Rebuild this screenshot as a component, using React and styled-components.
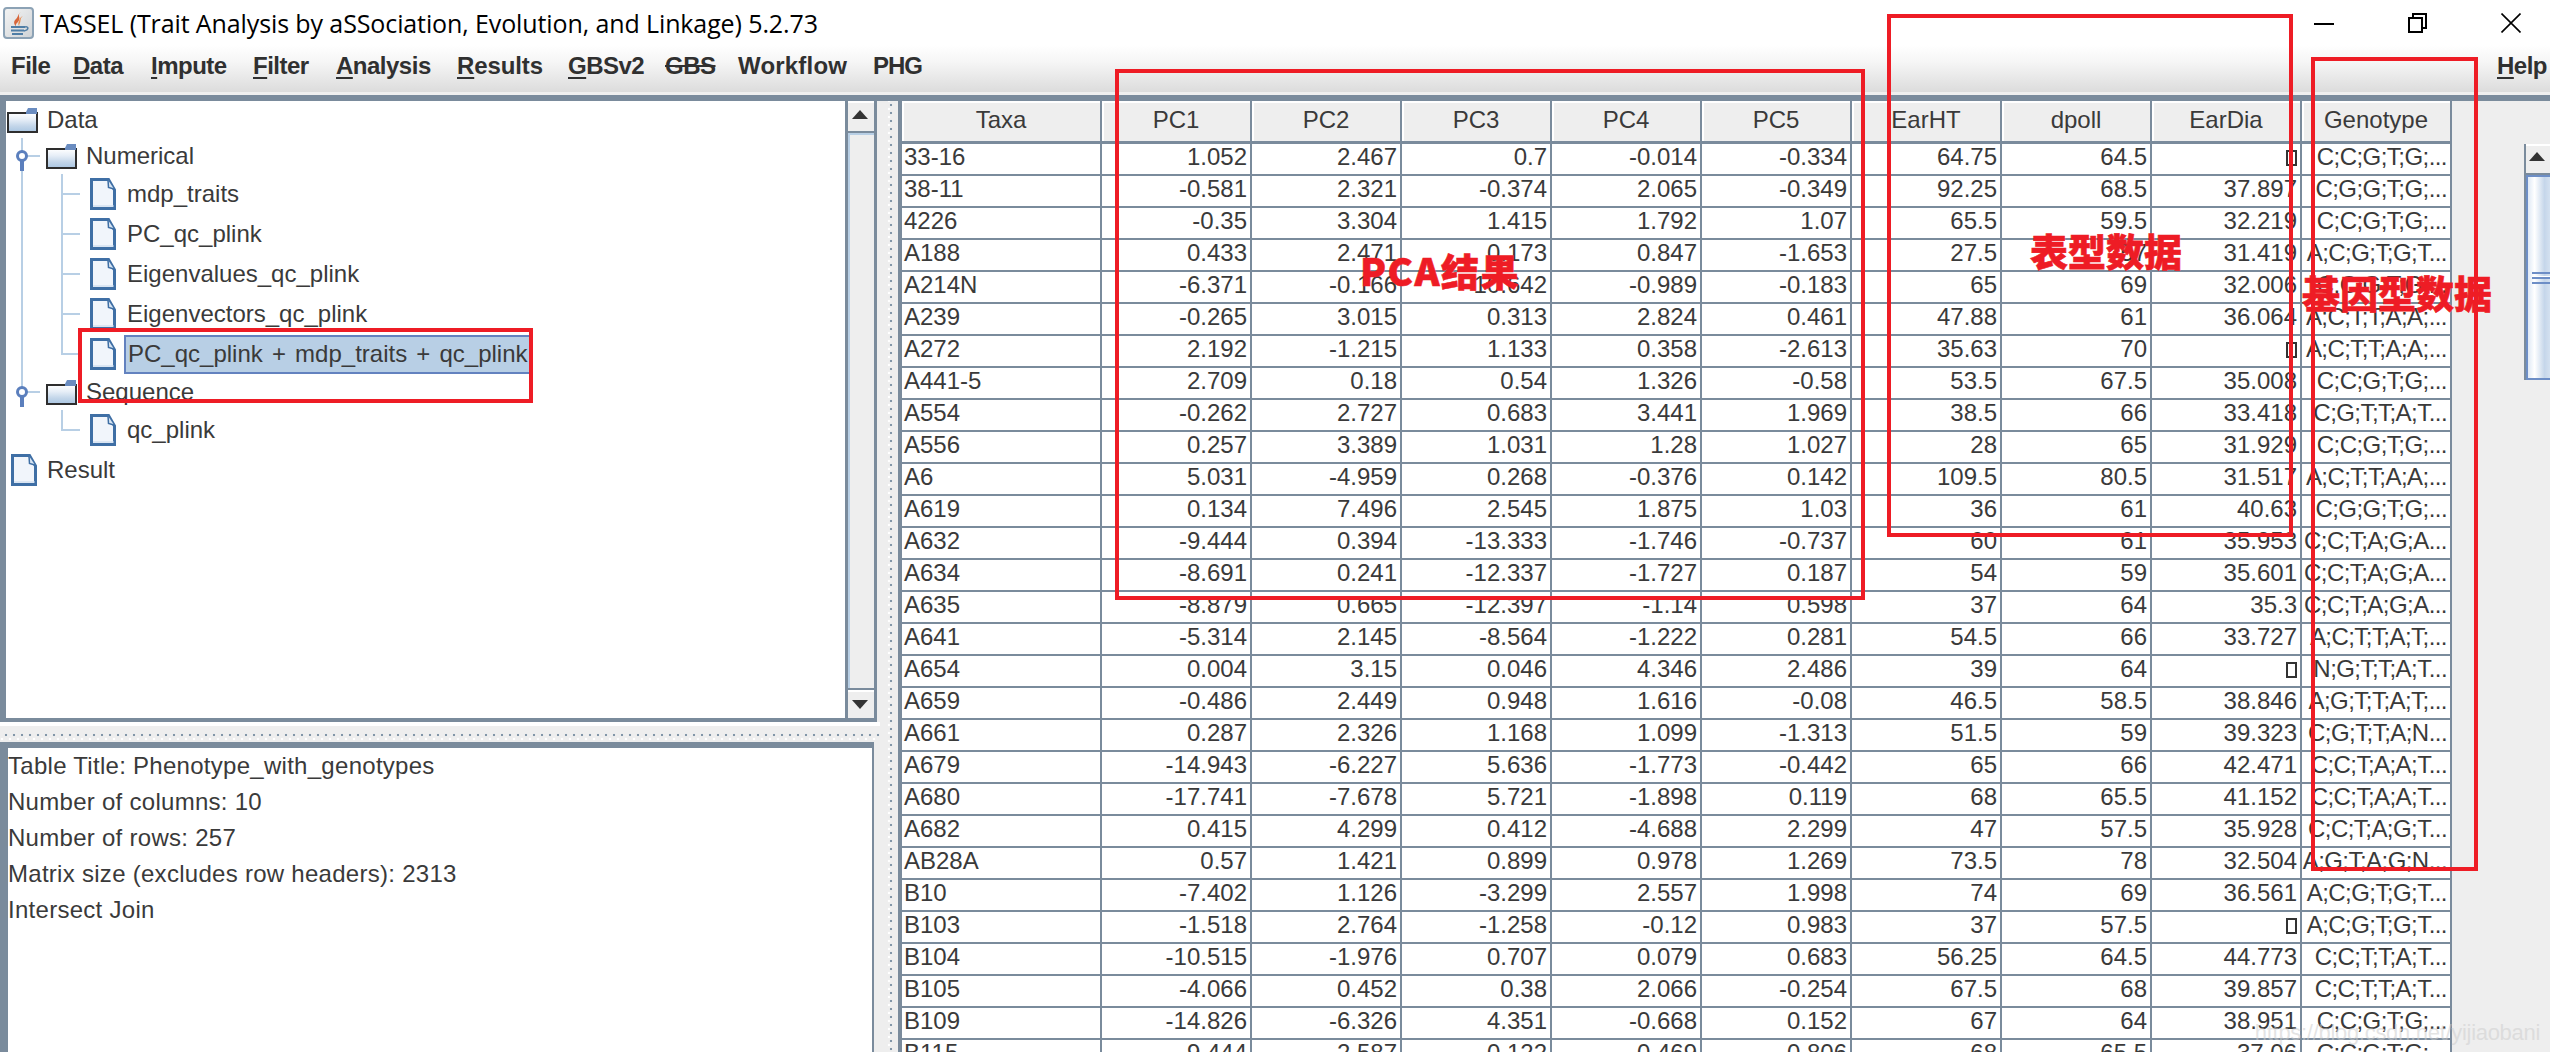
import React from 'react';
import styled, { createGlobalStyle } from 'styled-components';

const LINE = '#7a8b9c';

const GlobalStyle = createGlobalStyle`
  html, body {
    margin: 0;
    padding: 0;
    background: #eeeeee;
  }
  * {
    box-sizing: border-box;
  }
`;

const Window = styled.div`
  position: relative;
  width: 2550px;
  height: 1052px;
  overflow: hidden;
  display: flex;
  flex-direction: column;
  font-family: "Liberation Sans", Arial, sans-serif;
  font-size: 24px;
  color: #3a3a3a;
`;

const TitleBar = styled.div`
  height: 45px;
  flex: none;
  display: flex;
  align-items: center;
  background: #fff;
  padding-left: 3px;
`;

const TitleText = styled.div`
  margin-left: 6px;
  font-family: "Open Sans", sans-serif;
  font-size: 25px;
  letter-spacing: -0.11px;
  color: #000;
  white-space: nowrap;
`;

const WindowButtons = styled.div`
  margin-left: auto;
  display: flex;
  align-items: center;
  padding-right: 29px;
  gap: 74px;
`;

const MenuBar = styled.div`
  height: 50px;
  flex: none;
  display: flex;
  align-items: center;
  padding: 0 7px 5px 11px;
  background: linear-gradient(#fff 0%, #f6f6f6 35%, #dcdcdc 100%);
  border-bottom: 3px solid #efefef;
  font-weight: 700;
  white-space: nowrap;
`;

const MenuItem = styled.div`
  width: ${(p) => p.$w}px;
  flex: none;
  letter-spacing: ${(p) => p.$track ?? -0.5}px;
  color: #303030;
  margin-left: ${(p) => (p.$right ? 'auto' : '0')};
  text-decoration: ${(p) => (p.$struck ? 'line-through' : 'none')};
`;

const Mnemonic = styled.span`
  text-decoration: underline;
  text-underline-offset: 3px;
  text-decoration-thickness: 2px;
`;

const Workspace = styled.div`
  flex: 1;
  min-height: 0;
  display: flex;
  border-top: 6px solid ${LINE};
`;

const LeftColumn = styled.div`
  width: 885px;
  flex: none;
  display: flex;
  flex-direction: column;
  background: #eeeeee;
`;

const TreePane = styled.div`
  width: 877px;
  height: 621px;
  flex: none;
  display: flex;
  border-left: 6px solid ${LINE};
  border-right: 3px solid ${LINE};
  border-bottom: 4px solid ${LINE};
`;

const Tree = styled.div`
  flex: 1;
  background: #fff;
  padding-top: 1px;
`;

const TreeRow = styled.div`
  height: ${(p) => p.$h}px;
  display: flex;
  align-items: center;
  padding-left: ${(p) => p.$pad || 0}px;
  white-space: nowrap;
`;

const GUIDE_LIGHT = '#b8cfe5';

const Guide = styled.div`
  width: ${(p) => p.$w}px;
  height: 100%;
  flex: none;
  display: flex;
  align-items: center;
  padding-left: 10px;
  background-repeat: no-repeat;
  background-image:
    linear-gradient(${GUIDE_LIGHT}, ${GUIDE_LIGHT}),
    linear-gradient(${GUIDE_LIGHT}, ${GUIDE_LIGHT});
  background-size:
    2px ${(p) => (p.$line === 'none' ? '0' : p.$line === 'half' ? '50%' : '100%')},
    ${(p) => p.$stub || 0}px 2px;
  background-position:
    ${(p) => p.$x}px 0,
    ${(p) => p.$x}px 50%;
`;

const RowIcon = styled.svg`
  flex: none;
  display: block;
`;

const RowLabel = styled.span`
  margin-left: ${(p) => p.$gap}px;
  line-height: 38px;
`;

const SelectedLabel = styled.span`
  margin-left: 8px;
  height: 39px;
  line-height: 34px;
  padding: 0 1px 0 2px;
  word-spacing: 2.5px;
  background: #b8cfe5;
  border: 2px solid #6382bf;
  border-right-width: 1px;
`;

const ScrollBar = styled.div`
  width: ${(p) => p.$w}px;
  flex: none;
  display: flex;
  flex-direction: column;
  margin-top: ${(p) => p.$top || 0}px;
  border-left: ${(p) => p.$edge || 2}px solid ${LINE};
  background: #eeeeee;
`;

const ScrollButton = styled.div`
  height: ${(p) => p.$h}px;
  flex: none;
  display: flex;
  align-items: center;
  justify-content: center;
  padding-bottom: ${(p) => (p.$down ? 0 : 4)}px;
  padding-right: 2px;
  background: #eeeeee;
  box-shadow: inset 0 2px 0 #fff;
  border-top: ${(p) => (p.$down ? `2px solid ${LINE}` : 'none')};
  border-bottom: ${(p) => (p.$down ? 'none' : `2px solid ${LINE}`)};
`;

const PlainTrack = styled.div`
  flex: 1;
  border-top: 2px solid ${GUIDE_LIGHT};
  border-left: 2px solid ${GUIDE_LIGHT};
`;

const Thumb = styled.div`
  height: 205px;
  flex: none;
  display: flex;
  align-items: center;
  justify-content: center;
  border: 2px solid #6d8ec6;
  border-right: none;
  background: linear-gradient(90deg, #dfe9f5 0%, #ffffff 30%, #c5d6ea 75%, #d4e1f0 100%);
`;

const Grip = styled.div`
  width: 100%;
  height: 12px;
  margin-left: 4px;
  border-top: 2px solid #6d8ec6;
  border-bottom: 2px solid #6d8ec6;
  background: linear-gradient(#fff, #fff) no-repeat 0 2px / 100% 1px,
    linear-gradient(#6d8ec6, #6d8ec6) no-repeat 0 3px / 100% 2px;
`;

const SplitBar = styled.div`
  height: 20px;
  width: 880px;
  flex: none;
  background:
    radial-gradient(circle, #8296a8 1px, transparent 1.6px) 10px 5px / 8px 8px repeat-x,
    radial-gradient(circle, #ffffff 1px, transparent 1.6px) 14px 9px / 8px 8px repeat-x,
    #eeeeee;
  border-top: 4px solid #fff;
`;

const InfoPane = styled.div`
  flex: 1;
  width: 874px;
  background: #fff;
  border-top: 6px solid ${LINE};
  border-left: 8px solid ${LINE};
  border-right: 2px solid ${LINE};
`;

const InfoLine = styled.div`
  height: 36px;
  line-height: 36px;
  letter-spacing: 0.28px;
  white-space: nowrap;
`;

const VerticalSplit = styled.div`
  width: 13px;
  flex: none;
  background:
    radial-gradient(circle, #8296a8 1px, transparent 1.6px) 2px 0 / 8px 8px repeat-y,
    radial-gradient(circle, #ffffff 1px, transparent 1.6px) 0 4px / 8px 8px repeat-y,
    #eeeeee;
`;

const TablePane = styled.div`
  flex: 1;
  min-width: 0;
  display: flex;
  justify-content: space-between;
  align-items: flex-start;
  border-left: 4px solid ${LINE};
  background: #eeeeee;
`;

const Table = styled.table`
  width: 1550px;
  flex: none;
  table-layout: fixed;
  border-collapse: separate;
  border-spacing: 0;
  font-size: 24px;
`;

const HeadCell = styled.th`
  height: 43px;
  padding: 0 0 3px;
  font-weight: 400;
  text-align: center;
  background: #eeeeee;
  color: #3a3a3a;
  border-right: 2px solid ${LINE};
  border-bottom: 3px solid ${LINE};
  box-shadow: inset 2px 2px 0 #fff;
`;

const Cell = styled.td`
  height: 32px;
  padding: 0 ${(p) => (p.$left ? 0 : 3)}px 4px ${(p) => (p.$left ? 2 : 0)}px;
  line-height: 26px;
  background: #fff;
  color: #3a3a3a;
  text-align: ${(p) => (p.$left ? 'left' : 'right')};
  letter-spacing: ${(p) => (p.$tight ? '-0.55px' : '0')};
  white-space: nowrap;
  overflow: hidden;
  border-right: 2px solid ${LINE};
  border-bottom: 2px solid ${LINE};
`;

const Tofu = styled.span`
  display: inline-block;
  width: 11px;
  height: 16px;
  border: 2px solid #333;
  vertical-align: -1px;
`;

const MarkBox = styled.div`
  position: absolute;
  left: ${(p) => p.$x}px;
  top: ${(p) => p.$y}px;
  width: ${(p) => p.$w}px;
  height: ${(p) => p.$h}px;
  border: 4px solid #ee1c25;
  pointer-events: none;
`;

const MarkLabel = styled.div`
  position: absolute;
  left: ${(p) => p.$x}px;
  top: ${(p) => p.$y}px;
  font-family: "Noto Sans CJK SC", sans-serif;
  font-size: 38px;
  line-height: 40px;
  font-weight: 900;
  color: #ee1c25;
  -webkit-text-stroke: 0.6px #ee1c25;
  white-space: nowrap;
  letter-spacing: ${(p) => p.$track || 0}px;
`;

const Watermark = styled.div`
  position: absolute;
  right: 10px;
  bottom: 6px;
  font-size: 22px;
  letter-spacing: -0.3px;
  color: rgba(205, 205, 205, 0.55);
  white-space: nowrap;
`;

const Folder = () => (
  <RowIcon width="31" height="26" viewBox="0 0 31 26">
    <defs>
      <linearGradient id="folderFill" x1="0" y1="0" x2="0" y2="1">
        <stop offset="0" stopColor="#ffffff" />
        <stop offset="0.35" stopColor="#e6eef7" />
        <stop offset="0.7" stopColor="#c2d5e9" />
        <stop offset="1" stopColor="#aac6e2" />
      </linearGradient>
    </defs>
    <path d="M19 5 L21 1 H30 V6 H19 Z" fill="#6a8cc0" />
    <rect x="1" y="6" width="29" height="19" fill="url(#folderFill)" stroke="#2e2e2e" strokeWidth="2" />
    <path d="M19 6 H30" stroke="#6a8cc0" strokeWidth="2" />
  </RowIcon>
);

const FileIcon = () => (
  <RowIcon width="26" height="32" viewBox="0 0 26 32">
    <path d="M1.5 1.5 H18.5 L24.5 12 V30.5 H1.5 Z" fill="#f1f5fb" stroke="#3f6fa5" strokeWidth="3" />
    <path d="M18 2 L18.5 9.5 L24 11" fill="#d8e5f3" stroke="#3f6fa5" strokeWidth="1.5" />
    <path d="M3 29 H24" stroke="#c4d6ea" strokeWidth="1" transform="translate(0 -1)" />
  </RowIcon>
);

const Handle = () => (
  <RowIcon width="12" height="32" viewBox="0 0 12 32">
    <path d="M6 16 V31" stroke="#5b7fbd" strokeWidth="4" />
    <circle cx="6" cy="16" r="4.5" fill="#fff" stroke="#5b7fbd" strokeWidth="3" />
  </RowIcon>
);

const JavaIcon = () => (
  <RowIcon width="31" height="32" viewBox="0 0 31 32">
    <defs>
      <linearGradient id="javaBg" x1="0" y1="0" x2="1" y2="1">
        <stop offset="0" stopColor="#f4f4f4" />
        <stop offset="1" stopColor="#cfd3d6" />
      </linearGradient>
    </defs>
    <rect x="1" y="1" width="29" height="30" rx="3" fill="url(#javaBg)" stroke="#8ca2b5" strokeWidth="2" />
    <path d="M18 5 C13 9 19 10 15 15 C13 17 12 18 13.5 20 C11 17 10 15 13 12 C16 9 14 8 18 5 Z" fill="#d8663a" />
    <path d="M20 9 C17 11 18 13 17 16 C16 17.5 16 18.5 16.5 19.5 C15 18 15 16 16 14 C17 12 17 10 20 9 Z" fill="#e88a4a" />
    <path d="M8 20 H22 M8 23.5 H21 M9 27 H20" stroke="#4f7ea6" strokeWidth="2" fill="none" />
    <path d="M22 20 C26 19 26 23 21 24" stroke="#4f7ea6" strokeWidth="1.5" fill="none" />
  </RowIcon>
);

const ArrowUp = () => (
  <RowIcon width="16" height="9" viewBox="0 0 16 9">
    <path d="M8 0 L16 9 H0 Z" fill="#333" />
  </RowIcon>
);

const ArrowDown = () => (
  <RowIcon width="16" height="9" viewBox="0 0 16 9">
    <path d="M0 0 H16 L8 9 Z" fill="#333" />
  </RowIcon>
);

const MinimizeIcon = () => (
  <RowIcon width="20" height="20" viewBox="0 0 20 20">
    <path d="M0 11 H20" stroke="#000" strokeWidth="2" />
  </RowIcon>
);

const RestoreIcon = () => (
  <RowIcon width="19" height="20" viewBox="0 0 19 20">
    <rect x="1" y="5" width="13" height="14" fill="#fff" stroke="#000" strokeWidth="2" />
    <path d="M5 5 V1 H18 V15 H14" fill="none" stroke="#000" strokeWidth="2" />
  </RowIcon>
);

const CloseIcon = () => (
  <RowIcon width="20" height="20" viewBox="0 0 20 20">
    <path d="M0.5 0.5 L19.5 19.5 M19.5 0.5 L0.5 19.5" stroke="#000" strokeWidth="1.6" fill="none" />
  </RowIcon>
);

const COLUMNS = ['Taxa', 'PC1', 'PC2', 'PC3', 'PC4', 'PC5', 'EarHT', 'dpoll', 'EarDia', 'Genotype'];

const ROWS = [
  ['33-16', '1.052', '2.467', '0.7', '-0.014', '-0.334', '64.75', '64.5', null, 'C;C;G;T;G;...'],
  ['38-11', '-0.581', '2.321', '-0.374', '2.065', '-0.349', '92.25', '68.5', '37.897', 'C;G;G;T;G;...'],
  ['4226', '-0.35', '3.304', '1.415', '1.792', '1.07', '65.5', '59.5', '32.219', 'C;C;G;T;G;...'],
  ['A188', '0.433', '2.471', '0.173', '0.847', '-1.653', '27.5', '57', '31.419', 'A;C;G;T;G;T...'],
  ['A214N', '-6.371', '-0.166', '-10.642', '-0.989', '-0.183', '65', '69', '32.006', 'C;C;G;T;G;...'],
  ['A239', '-0.265', '3.015', '0.313', '2.824', '0.461', '47.88', '61', '36.064', 'A;C;T;T;A;A;...'],
  ['A272', '2.192', '-1.215', '1.133', '0.358', '-2.613', '35.63', '70', null, 'A;C;T;T;A;A;...'],
  ['A441-5', '2.709', '0.18', '0.54', '1.326', '-0.58', '53.5', '67.5', '35.008', 'C;C;G;T;G;...'],
  ['A554', '-0.262', '2.727', '0.683', '3.441', '1.969', '38.5', '66', '33.418', 'C;G;T;T;A;T...'],
  ['A556', '0.257', '3.389', '1.031', '1.28', '1.027', '28', '65', '31.929', 'C;C;G;T;G;...'],
  ['A6', '5.031', '-4.959', '0.268', '-0.376', '0.142', '109.5', '80.5', '31.517', 'A;C;T;T;A;A;...'],
  ['A619', '0.134', '7.496', '2.545', '1.875', '1.03', '36', '61', '40.63', 'C;G;G;T;G;...'],
  ['A632', '-9.444', '0.394', '-13.333', '-1.746', '-0.737', '60', '61', '35.953', 'C;C;T;A;G;A...'],
  ['A634', '-8.691', '0.241', '-12.337', '-1.727', '0.187', '54', '59', '35.601', 'C;C;T;A;G;A...'],
  ['A635', '-8.879', '0.665', '-12.397', '-1.14', '0.598', '37', '64', '35.3', 'C;C;T;A;G;A...'],
  ['A641', '-5.314', '2.145', '-8.564', '-1.222', '0.281', '54.5', '66', '33.727', 'A;C;T;T;A;T;...'],
  ['A654', '0.004', '3.15', '0.046', '4.346', '2.486', '39', '64', null, 'N;G;T;T;A;T...'],
  ['A659', '-0.486', '2.449', '0.948', '1.616', '-0.08', '46.5', '58.5', '38.846', 'A;G;T;T;A;T;...'],
  ['A661', '0.287', '2.326', '1.168', '1.099', '-1.313', '51.5', '59', '39.323', 'C;G;T;T;A;N...'],
  ['A679', '-14.943', '-6.227', '5.636', '-1.773', '-0.442', '65', '66', '42.471', 'C;C;T;A;A;T...'],
  ['A680', '-17.741', '-7.678', '5.721', '-1.898', '0.119', '68', '65.5', '41.152', 'C;C;T;A;A;T...'],
  ['A682', '0.415', '4.299', '0.412', '-4.688', '2.299', '47', '57.5', '35.928', 'C;C;T;A;G;T...'],
  ['AB28A', '0.57', '1.421', '0.899', '0.978', '1.269', '73.5', '78', '32.504', 'A;G;T;A;G;N...'],
  ['B10', '-7.402', '1.126', '-3.299', '2.557', '1.998', '74', '69', '36.561', 'A;C;G;T;G;T...'],
  ['B103', '-1.518', '2.764', '-1.258', '-0.12', '0.983', '37', '57.5', null, 'A;C;G;T;G;T...'],
  ['B104', '-10.515', '-1.976', '0.707', '0.079', '0.683', '56.25', '64.5', '44.773', 'C;C;T;T;A;T...'],
  ['B105', '-4.066', '0.452', '0.38', '2.066', '-0.254', '67.5', '68', '39.857', 'C;C;T;T;A;T...'],
  ['B109', '-14.826', '-6.326', '4.351', '-0.668', '0.152', '67', '64', '38.951', 'C;C;G;T;G;...'],
  ['B115', '9.444', '2.587', '0.122', '0.469', '0.806', '68', '65.5', '37.06', 'C;C;G;T;G;...'],
];

const INFO = [
  'Table Title: Phenotype_with_genotypes',
  'Number of columns: 10',
  'Number of rows: 257',
  'Matrix size (excludes row headers): 2313',
  'Intersect Join',
];

const FileRow = ({ label, last, noParent, selected }) => (
  <TreeRow $h={40}>
    <Guide $w={40} $x={15} $line={noParent ? 'none' : 'full'} />
    <Guide $w={44} $x={15} $stub={19} $line={last ? 'half' : 'full'} />
    <FileIcon />
    {selected ? <SelectedLabel>{label}</SelectedLabel> : <RowLabel $gap={11}>{label}</RowLabel>}
  </TreeRow>
);

const FolderRow = ({ label, lastBranch }) => (
  <TreeRow $h={36}>
    <Guide $w={40} $x={15} $stub={19} $line={lastBranch ? 'half' : 'full'}>
      <Handle />
    </Guide>
    <Folder />
    <RowLabel $gap={9}>{label}</RowLabel>
  </TreeRow>
);

export default function App() {
  return (
    <Window>
      <GlobalStyle />
      <TitleBar>
        <JavaIcon />
        <TitleText>TASSEL (Trait Analysis by aSSociation, Evolution, and Linkage) 5.2.73</TitleText>
        <WindowButtons>
          <MinimizeIcon />
          <RestoreIcon />
          <CloseIcon />
        </WindowButtons>
      </TitleBar>
      <MenuBar>
        <MenuItem $w={62}>File</MenuItem>
        <MenuItem $w={78}><Mnemonic>D</Mnemonic>ata</MenuItem>
        <MenuItem $w={102}><Mnemonic>I</Mnemonic>mpute</MenuItem>
        <MenuItem $w={83}><Mnemonic>F</Mnemonic>ilter</MenuItem>
        <MenuItem $w={121}><Mnemonic>A</Mnemonic>nalysis</MenuItem>
        <MenuItem $w={111} $track={-0.1}><Mnemonic>R</Mnemonic>esults</MenuItem>
        <MenuItem $w={97}><Mnemonic>G</Mnemonic>BSv2</MenuItem>
        <MenuItem $w={73} $struck>GBS</MenuItem>
        <MenuItem $w={135} $track={0.2}>Workflow</MenuItem>
        <MenuItem $w={60} $track={-1}>PHG</MenuItem>
        <MenuItem $w={46} $right><Mnemonic>H</Mnemonic>elp</MenuItem>
      </MenuBar>
      <Workspace>
        <LeftColumn>
          <TreePane>
            <Tree>
              <TreeRow $h={36} $pad={1}>
                <Folder />
                <RowLabel $gap={9}>Data</RowLabel>
              </TreeRow>
              <FolderRow label="Numerical" />
              <FileRow label="mdp_traits" />
              <FileRow label="PC_qc_plink" />
              <FileRow label="Eigenvalues_qc_plink" />
              <FileRow label="Eigenvectors_qc_plink" />
              <FileRow label="PC_qc_plink + mdp_traits + qc_plink" last selected />
              <FolderRow label="Sequence" lastBranch />
              <FileRow label="qc_plink" last noParent />
              <TreeRow $h={40} $pad={5}>
                <FileIcon />
                <RowLabel $gap={10}>Result</RowLabel>
              </TreeRow>
            </Tree>
            <ScrollBar $w={29} $edge={3}>
              <ScrollButton $h={32}><ArrowUp /></ScrollButton>
              <PlainTrack />
              <ScrollButton $h={30} $down><ArrowDown /></ScrollButton>
            </ScrollBar>
          </TreePane>
          <SplitBar />
          <InfoPane>
            {INFO.map((line) => (
              <InfoLine key={line}>{line}</InfoLine>
            ))}
          </InfoPane>
        </LeftColumn>
        <VerticalSplit />
        <TablePane>
          <Table>
            <colgroup>
              {COLUMNS.map((name, i) => (
                <col key={name} width={i === 0 ? 200 : 150} />
              ))}
            </colgroup>
            <thead>
              <tr>
                {COLUMNS.map((name) => (
                  <HeadCell key={name}>{name}</HeadCell>
                ))}
              </tr>
            </thead>
            <tbody>
              {ROWS.map((row) => (
                <tr key={row[0]}>
                  {row.map((value, i) => (
                    <Cell key={i} $left={i === 0} $tight={i === 9}>
                      {value === null ? <Tofu /> : value}
                    </Cell>
                  ))}
                </tr>
              ))}
            </tbody>
          </Table>
          <ScrollBar $w={26} $top={43}>
            <ScrollButton $h={31}><ArrowUp /></ScrollButton>
            <Thumb><Grip /></Thumb>
          </ScrollBar>
        </TablePane>
      </Workspace>
      <MarkBox $x={78} $y={328} $w={455} $h={75} />
      <MarkBox $x={1115} $y={69} $w={750} $h={531} />
      <MarkBox $x={1887} $y={14} $w={406} $h={523} />
      <MarkBox $x={2311} $y={57} $w={167} $h={814} />
      <MarkLabel $x={1360} $y={250} $track={1.5}>PCA结果</MarkLabel>
      <MarkLabel $x={2030} $y={230}>表型数据</MarkLabel>
      <MarkLabel $x={2302} $y={272}>基因型数据</MarkLabel>
      <Watermark>https://blog.csdn.net/yijiaobani</Watermark>
    </Window>
  );
}
